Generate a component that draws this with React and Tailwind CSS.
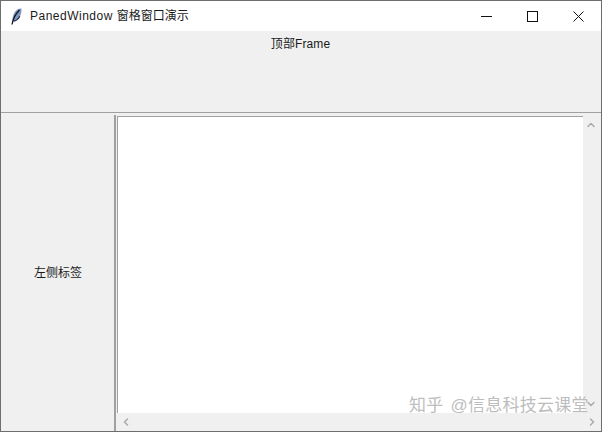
import { ChevronUp, ChevronDown, ChevronLeft, ChevronRight } from 'lucide-react';

const sans = "font-['Liberation_Sans','Noto_Sans_CJK_SC',sans-serif]";

function Feather() {
  return (
    <svg width="11" height="17" viewBox="0 0 11 17" aria-hidden="true">
      <path d="M1.5 13 C1 9 3 4 6 1.8 C7.5 0.8 9.2 0.4 10.4 0.6 C10.8 3.5 10 7.5 8 10 C6.4 11.8 4 13.2 2 13.4 Z" fill="#7f95ba" />
      <path d="M1 16.5 C2 11 4 6.5 8.5 2" stroke="#0c1424" strokeWidth="1.3" fill="none" />
      <path d="M2.4 13.2 C4.8 12.8 7.4 11 8.8 8.2" stroke="#1d2c4a" strokeWidth="1.2" fill="none" />
    </svg>
  );
}

function WinIcon({ children }) {
  return (
    <div className="w-[46px] h-full flex items-center justify-center">
      <svg width="11" height="11" viewBox="0 0 11 11" fill="none" stroke="#111" strokeWidth="1" aria-hidden="true">
        {children}
      </svg>
    </div>
  );
}

export default function App() {
  return (
    <div className={`w-[602px] h-[432px] overflow-hidden relative flex flex-col bg-[#f0f0f0] border border-[#6e6e6e] text-[12px] text-[#1a1a1a] ${sans}`}>
      {/* Title bar */}
      <div className="h-[30px] shrink-0 bg-white flex items-center">
        <div className="w-[29px] pl-[10px] flex items-center shrink-0">
          <Feather />
        </div>
        <span className="whitespace-nowrap">
          <span className="tracking-[0.5px]">PanedWindow </span>窗格窗口演示
        </span>
        <div className="ml-auto flex items-center h-full">
          <WinIcon><path d="M0 5.5 H11" /></WinIcon>
          <WinIcon><rect x="0.5" y="0.5" width="10" height="10" /></WinIcon>
          <WinIcon><path d="M0.5 0.5 L10.5 10.5 M10.5 0.5 L0.5 10.5" /></WinIcon>
        </div>
      </div>

      {/* Top frame */}
      <div className="h-[82px] shrink-0 flex justify-center pt-[4px] pr-[1px] border-b border-[#a0a0a0]">
        <span className="tracking-[0.1px]">顶部Frame</span>
      </div>

      {/* Lower pane */}
      <div className="flex-1 flex min-h-0">
        <div className="w-[113px] shrink-0 flex items-center justify-center pt-[1px] pl-[1px]">
          <span>左侧标签</span>
        </div>
        <div className="w-[2px] shrink-0 bg-[#a0a0a0] mt-[2px]" />
        <div className="flex-1 flex flex-col min-w-0 pl-[1px] pt-[3px]">
          <div className="flex-1 flex min-h-0">
            <div className="flex-1 bg-white border-l border-t border-[#a0a0a0]" />
            <div className="w-[18px] shrink-0 flex flex-col items-center justify-between pt-[3px] pr-[3px]">
              <ChevronUp size={12} strokeWidth={3} color="#aaaaaa" />
              <ChevronDown size={12} strokeWidth={3} color="#aaaaaa" className="mb-[3px]" />
            </div>
          </div>
          <div className="h-[18px] shrink-0 flex items-center justify-between px-[3px]">
            <ChevronLeft size={12} strokeWidth={3} color="#aaaaaa" />
            <ChevronRight size={12} strokeWidth={3} color="#aaaaaa" />
          </div>
        </div>
      </div>

      {/* Watermark */}
      <div className="absolute left-[408px] top-[393px] text-[17px] leading-[24px] whitespace-nowrap text-[#bdbdbd] tracking-[0.25px] [word-spacing:2px] [text-shadow:0_0_2px_#ffffff]">
        知乎 @信息科技云课堂
      </div>
    </div>
  );
}
